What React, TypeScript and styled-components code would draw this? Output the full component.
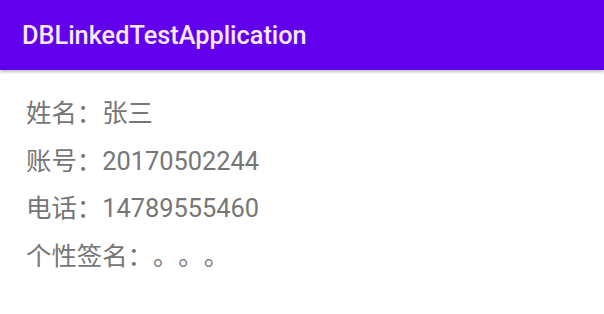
import { createGlobalStyle, styled } from "styled-components";

const GlobalStyle = createGlobalStyle`
    html, body {
        margin: 0;
        padding: 0;
        background: #ffffff;
    }
    body {
        font-family: Roboto, "Noto Sans CJK SC", sans-serif;
    }
`;

const Screen = styled.div`
    width: 604px;
    height: 314px;
    background: #ffffff;
    overflow: hidden;
`;

const AppBar = styled.header`
    height: 70px;
    background: #6200ee;
    display: flex;
    align-items: center;
    padding-left: 22px;
    box-shadow: 0 2px 3px rgba(0, 0, 0, 0.25);
    position: relative;
`;

const Title = styled.h1`
    margin: 0;
    color: #f7e8ff;
    font-family: Roboto, sans-serif;
    font-weight: 500;
    font-size: 25.3px;
    padding-top: 1px;
`;

const Content = styled.main`
    display: flex;
    flex-direction: column;
    padding: 20px 26px;
`;

// full-width punctuation must keep its full em, as on the device
const InfoRow = styled.p`
    margin: 0;
    height: 47.5px;
    line-height: 47.5px;
    color: #767676;
    font-size: 25.4px;
    font-family: Roboto, "Noto Sans CJK SC", sans-serif;
    white-space: nowrap;
    text-spacing-trim: space-all;
`;

const rows = [
    { label: "姓名", value: "张三" },
    { label: "账号", value: "20170502244" },
    { label: "电话", value: "14789555460" },
    { label: "个性签名", value: "。。。" },
];

export default function App() {
    return <Screen>
        <GlobalStyle />
        <AppBar>
            <Title>DBLinkedTestApplication</Title>
        </AppBar>
        <Content>
            {rows.map(r => <InfoRow key={r.label}>{r.label}：{r.value}</InfoRow>)}
        </Content>
    </Screen>;
}
